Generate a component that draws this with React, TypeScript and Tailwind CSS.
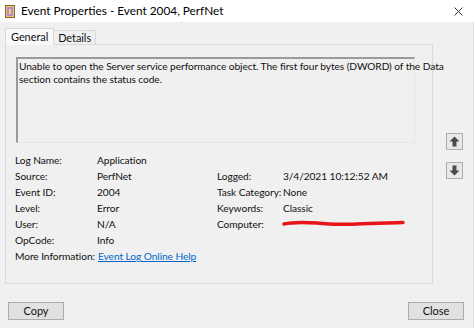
import React from 'react';

const rowsLeft = [
  ['Log Name:', 'Application'],
  ['Source:', 'PerfNet'],
  ['Event ID:', '2004'],
  ['Level:', 'Error'],
  ['User:', 'N/A'],
  ['OpCode:', 'Info'],
];

const rowsRight = [
  ['Logged:', '3/4/2021 10:12:52 AM'],
  ['Task Category:', 'None'],
  ['Keywords:', 'Classic'],
  ['Computer:', ''],
];

const ArrowBtn: React.FC<{ down?: boolean }> = ({ down }) => (
  <div className="w-[17px] h-[17px] border border-[#adadad] bg-[#e8e8e8] flex items-center justify-center">
    <svg width="11" height="11" viewBox="0 0 11 11" className={down ? 'rotate-180' : ''}>
      <path d="M5.5 0.5 L10.5 5.5 L7.5 5.5 L7.5 10.5 L3.5 10.5 L3.5 5.5 L0.5 5.5 Z" fill="#4a4a4a" />
    </svg>
  </div>
);

export default function App() {
  return (
    <div className="w-[474px] h-[328px] bg-[#f0f0f0] overflow-hidden font-['Lato','Noto_Sans',sans-serif] text-[10.2px] tracking-[-0.08px] text-[#111] leading-[16px] whitespace-nowrap relative">
      {/* title bar */}
      <div className="h-[22px] bg-white flex items-center pl-[5px]">
        <svg width="10" height="13" viewBox="0 0 10 13">
          <rect x="0.5" y="0.5" width="9" height="12" fill="#e9c46a" stroke="#8a6a2a" />
          <rect x="2" y="2" width="6" height="9" fill="#b48ad8" />
          <rect x="4" y="4" width="2" height="5" fill="#f4d35e" />
        </svg>
        <span className="ml-[6px] text-[11.8px] tracking-normal text-black">Event Properties - Event 2004, PerfNet</span>
        <svg className="ml-auto mr-[11px]" width="9" height="9" viewBox="0 0 9 9">
          <path d="M0.5 0.5 L8.5 8.5 M8.5 0.5 L0.5 8.5" stroke="#333" strokeWidth="1" />
        </svg>
      </div>

      <div className="flex pl-[5px] pt-[6px]">
        <div className="w-[428px] flex flex-col">
          {/* tabs */}
          <div className="h-[16px] flex items-end text-[11px]">
            <div className="h-[17px] -mb-px px-[5px] border border-b-0 border-[#d9d9d9] bg-[#f9f9f9] flex items-center relative z-10">
              General
            </div>
            <div className="h-[14px] px-[4px] border border-l-0 border-b-0 border-[#d9d9d9] bg-[#f0f0f0] flex items-center">
              Details
            </div>
          </div>
          {/* panel */}
          <div className="h-[240px] border border-[#d9d9d9] bg-[#f0f0f0] pl-[10px] pt-[12px]">
            <div className="w-[399px] h-[86px] border-t-2 border-l-2 border-t-[#9a9a9a] border-l-[#9a9a9a] border-r border-b border-r-[#e6e6e6] border-b-[#e6e6e6] pl-[1px] pt-[1px] leading-[13px]">
              Unable to open the Server service performance object. The first four bytes (DWORD) of the Data
              <br />
              section contains the status code.
            </div>
            <div className="flex mt-[9px] -ml-px">
              <div className="w-[202px] flex flex-col">
                {rowsLeft.map(([l, v]) => (
                  <div key={l} className="flex h-[16px]">
                    <span className="w-[82px]">{l}</span>
                    <span>{v}</span>
                  </div>
                ))}
                <div className="flex h-[16px]">
                  <span className="w-[83px]">More Information:</span>
                  <span className="text-[#0066cc] underline">Event Log Online Help</span>
                </div>
              </div>
              <div className="flex flex-col pt-[16px]">
                {rowsRight.map(([l, v]) => (
                  <div key={l} className="flex h-[16px]">
                    <span className="w-[66px]">{l}</span>
                    {l === 'Computer:' ? (
                      <svg width="124" height="10" viewBox="0 0 124 10" className="mt-[3px] -ml-px">
                        <path
                          d="M2 5 C 10 3, 20 3, 35 4 S 60 6, 75 5 S 105 4, 121 3.5"
                          stroke="#e8141a"
                          strokeWidth="3.5"
                          strokeLinecap="round"
                          fill="none"
                        />
                      </svg>
                    ) : (
                      <span>{v}</span>
                    )}
                  </div>
                ))}
              </div>
            </div>
          </div>
        </div>
        <div className="ml-[13px] pt-[105px] flex flex-col gap-[12px]">
          <ArrowBtn />
          <ArrowBtn down />
        </div>
      </div>

      <div className="flex justify-between pl-[8px] pr-[10px] mt-[18px] text-[11px]">
        <button className="w-[56px] h-[18px] border border-[#adadad] bg-[#e1e1e1] leading-[16px]">Copy</button>
        <button className="w-[56px] h-[18px] border border-[#adadad] bg-[#e1e1e1] leading-[16px]">Close</button>
      </div>
      <div className="absolute top-[22px] right-0 w-px h-[306px] bg-[#e0e0e0]" />
    </div>
  );
}
